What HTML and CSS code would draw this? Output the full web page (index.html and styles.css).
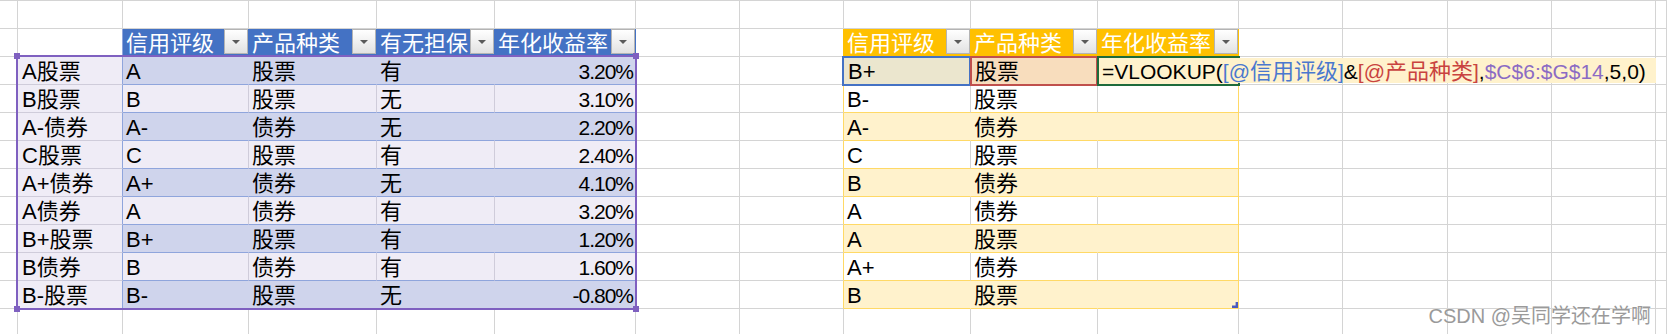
FILE: index.html
```html
<!DOCTYPE html>
<html lang="zh-CN">
<head>
<meta charset="utf-8">
<title>VLOOKUP</title>
<link rel="stylesheet" href="styles.css">
</head>
<body>
<div class="sheet">
  <div class="cells">
    <!-- row 1 -->
    <div class="c"></div><div class="c"></div><div class="c"></div><div class="c"></div><div class="c"></div><div class="c"></div><div class="c"></div><div class="c"></div><div class="c"></div><div class="c"></div><div class="c"></div><div class="c"></div><div class="c"></div><div class="c"></div><div class="c"></div><div class="c"></div>
    <!-- row 2 : headers -->
    <div class="c"></div><div class="c br"></div>
    <div class="c hb"><span>信用评级</span><span class="dd"></span></div>
    <div class="c hb"><span>产品种类</span><span class="dd"></span></div>
    <div class="c hb"><span>有无担保</span><span class="dd"></span></div>
    <div class="c hb"><span>年化收益率</span><span class="dd"></span></div>
    <div class="c"></div><div class="c yr"></div>
    <div class="c hy"><span>信用评级</span><span class="dd"></span></div>
    <div class="c hy"><span>产品种类</span><span class="dd"></span></div>
    <div class="c hy"><span>年化收益率</span><span class="dd"></span></div>
    <div class="c"></div><div class="c"></div><div class="c"></div><div class="c"></div><div class="c"></div>
    <!-- row 3 -->
    <div class="c"></div><div class="c b">A股票</div><div class="c d">A</div><div class="c d">股票</div><div class="c d">有</div><div class="c d r">3.20%</div><div class="c"></div><div class="c yl"></div>
    <div class="c ib">B+</div><div class="c jp">股票</div><div class="c y k"></div>
    <div class="c"></div><div class="c"></div><div class="c"></div><div class="c"></div><div class="c"></div>
    <!-- row 4 -->
    <div class="c"></div><div class="c b">B股票</div><div class="c l">B</div><div class="c l">股票</div><div class="c l">无</div><div class="c l r">3.10%</div><div class="c"></div><div class="c yl"></div>
    <div class="c w">B-</div><div class="c w">股票</div><div class="c w k"></div>
    <div class="c"></div><div class="c"></div><div class="c"></div><div class="c"></div><div class="c"></div>
    <!-- row 5 -->
    <div class="c"></div><div class="c b">A-债券</div><div class="c d">A-</div><div class="c d">债券</div><div class="c d">无</div><div class="c d r">2.20%</div><div class="c"></div><div class="c yl"></div>
    <div class="c y">A-</div><div class="c y">债券</div><div class="c y k"></div>
    <div class="c"></div><div class="c"></div><div class="c"></div><div class="c"></div><div class="c"></div>
    <!-- row 6 -->
    <div class="c"></div><div class="c b">C股票</div><div class="c l">C</div><div class="c l">股票</div><div class="c l">有</div><div class="c l r">2.40%</div><div class="c"></div><div class="c yl"></div>
    <div class="c w">C</div><div class="c w">股票</div><div class="c w k"></div>
    <div class="c"></div><div class="c"></div><div class="c"></div><div class="c"></div><div class="c"></div>
    <!-- row 7 -->
    <div class="c"></div><div class="c b">A+债券</div><div class="c d">A+</div><div class="c d">债券</div><div class="c d">无</div><div class="c d r">4.10%</div><div class="c"></div><div class="c yl"></div>
    <div class="c y">B</div><div class="c y">债券</div><div class="c y k"></div>
    <div class="c"></div><div class="c"></div><div class="c"></div><div class="c"></div><div class="c"></div>
    <!-- row 8 -->
    <div class="c"></div><div class="c b">A债券</div><div class="c l">A</div><div class="c l">债券</div><div class="c l">有</div><div class="c l r">3.20%</div><div class="c"></div><div class="c yl"></div>
    <div class="c w">A</div><div class="c w">债券</div><div class="c w k"></div>
    <div class="c"></div><div class="c"></div><div class="c"></div><div class="c"></div><div class="c"></div>
    <!-- row 9 -->
    <div class="c"></div><div class="c b">B+股票</div><div class="c d">B+</div><div class="c d">股票</div><div class="c d">有</div><div class="c d r">1.20%</div><div class="c"></div><div class="c yl"></div>
    <div class="c y">A</div><div class="c y">股票</div><div class="c y k"></div>
    <div class="c"></div><div class="c"></div><div class="c"></div><div class="c"></div><div class="c"></div>
    <!-- row 10 -->
    <div class="c"></div><div class="c b">B债券</div><div class="c l">B</div><div class="c l">债券</div><div class="c l">有</div><div class="c l r">1.60%</div><div class="c"></div><div class="c yl"></div>
    <div class="c w">A+</div><div class="c w">债券</div><div class="c w k"></div>
    <div class="c"></div><div class="c"></div><div class="c"></div><div class="c"></div><div class="c"></div>
    <!-- row 11 -->
    <div class="c"></div><div class="c b">B-股票</div><div class="c d">B-</div><div class="c d">股票</div><div class="c d">无</div><div class="c d r">-0.80%</div><div class="c"></div><div class="c yl"></div>
    <div class="c y">B</div><div class="c y">股票</div><div class="c y k"></div>
    <div class="c"></div><div class="c"></div><div class="c"></div><div class="c"></div><div class="c"></div>
    <!-- row 12 -->
    <div class="c"></div><div class="c"></div><div class="c"></div><div class="c"></div><div class="c"></div><div class="c"></div><div class="c"></div><div class="c"></div><div class="c"></div><div class="c"></div><div class="c"></div><div class="c"></div><div class="c"></div><div class="c"></div><div class="c"></div><div class="c"></div>
  </div>

  <div class="overlay">
    <div class="sel"><span class="hd tl"></span><span class="hd tr"></span><span class="hd bl"></span><span class="hd bra"></span></div>
    <div class="refb"></div>
    <div class="refr"></div>
    <div class="act"></div>
    <div class="edit">=VLOOKUP(<span class="fb">[@<span class="cj">信用评级</span>]</span>&amp;<span class="fr">[@<span class="cj">产品种类</span>]</span>,<span class="fp">$C$6:$G$14</span>,5,0)</div>
    <div class="rz"></div>
    <div class="wm">CSDN @吴同学还在学啊</div>
  </div>
</div>
</body>
</html>
```
FILE: styles.css
```css
* { box-sizing: border-box; }

html, body {
  margin: 0;
  padding: 0;
  background: #ffffff;
  overflow: hidden;
}

body {
  width: 1667px;
  height: 334px;
  font-family: "Liberation Sans", "Noto Sans CJK SC", sans-serif;
  font-size: 22px;
  color: #000000;
}

.sheet {
  display: grid;
  grid-template-columns: minmax(0, 1fr);
  border-top: 1px solid #d4d4d4;
}

.cells,
.overlay {
  grid-area: 1 / 1;
  display: grid;
  grid-template-columns: 18px 105px 126px 128px 118px 141px 104px 104px 127px 127px 141px 104px 105px 104px 104px minmax(0, 1fr);
  grid-template-rows: repeat(12, 28px);
  min-width: 0;
}

.overlay { z-index: 1; }

/* ---------- cells ---------- */
.c {
  border-right: 1px solid #d4d4d4;
  border-bottom: 1px solid #d4d4d4;
  padding: 3px 3px 0 3px;
  line-height: 24px;
  white-space: nowrap;
  overflow: hidden;
}

.br { border-right-color: #8fa5dc; }
.yr { border-right-color: #ffc000; }
.yl { border-right-color: #ffd966; }

/* headers */
.hb, .hy {
  display: flex;
  justify-content: space-between;
  align-items: flex-start;
  padding: 0 0 0 3px;
  color: #ffffff;
  overflow: visible;
}
.hb { background: #4472c4; border-color: #4472c4; }
.hy { background: #ffc000; border-color: #ffc000; }
.hb span:first-child, .hy span:first-child {
  padding-top: 3px;
  line-height: 24px;
}

.dd {
  flex: none;
  width: 24px;
  height: 25px;
  border: 1px solid #b4b4b4;
  background: linear-gradient(#ffffff, #e2e2e2);
  display: flex;
  align-items: center;
  justify-content: center;
}
.dd::after {
  content: "";
  border-left: 4px solid transparent;
  border-right: 4px solid transparent;
  border-top: 4px solid #5a5a5a;
}

/* left table (selected, tinted) */
.b {
  background: #efecf6;
  border-bottom-color: #cfccda;
  border-right-color: #8fa5dc;
  padding-left: 4px;
}
.d {
  background: #cfd4ec;
  border-right-color: #cfd4ec;
  border-bottom-color: #8fa5dc;
}
.l {
  background: #efecf6;
  border-right-color: #cfccda;
  border-bottom-color: #8fa5dc;
}
.r {
  text-align: right;
  padding-right: 2px;
  font-size: 21px;
  letter-spacing: -1px;
}

/* right table */
.y {
  background: #fff2cc;
  border-right-color: #fff2cc;
  border-bottom-color: #ffd966;
}
.w {
  border-bottom-color: #ffd966;
}
.k { border-right-color: #ffd966; }
.ib { background: #ebe6ce; padding-left: 4px; }
.jp { background: #f8ddbd; padding-left: 4px; }

/* ---------- overlay ---------- */
.sel {
  grid-row: 3 / 12;
  grid-column: 2 / 7;
  margin: -2px -1px -1px -2px;
  border: 2px solid #7f60c0;
  position: relative;
}
.hd {
  position: absolute;
  width: 6px;
  height: 6px;
  background: #7f60c0;
}
.tl { left: -4px; top: -4px; }
.tr { right: -4px; top: -4px; }
.bl { left: -4px; bottom: -4px; }
.bra { right: -4px; bottom: -4px; }

.refb {
  grid-row: 3;
  grid-column: 9;
  margin: -1px 0 -1px -2px;
  border: 2px solid #4472c4;
}
.refr {
  grid-row: 3;
  grid-column: 10;
  margin: -1px 0 -1px -1px;
  border: 2px solid #c0504d;
}
.act {
  grid-row: 3;
  grid-column: 11;
  margin: -1px -1px -1px -1px;
  border: 2px solid #1e6b3c;
}
.edit {
  grid-row: 3;
  grid-column: 11 / 16;
  min-width: 0;
  overflow: hidden;
  margin: 1px 0 2px 1px;
  padding: 2px 0 0 3px;
  font-size: 21px;
  line-height: 24px;
  background: #fff2cc;
  white-space: nowrap;
  position: relative;
  z-index: 2;
}
.cj { font-size: 22px; }
.fb { color: #4a78cf; }
.fr { color: #c9433f; }
.fp { color: #8b6bc4; }

.rz {
  grid-row: 11;
  grid-column: 11;
  justify-self: end;
  align-self: end;
  width: 6px;
  height: 6px;
  margin: 0 1px 1px 0;
  background: #4a5bbf;
  clip-path: polygon(100% 0, 100% 100%, 0 100%, 0 60%, 60% 60%, 60% 0);
}

.wm {
  grid-row: 12;
  grid-column: 12 / 17;
  justify-self: end;
  align-self: start;
  margin: -4px 16px 0 0;
  font-size: 20px;
  line-height: 22px;
  color: #9a9a9a;
  text-shadow: 0 0 1px #ffffff;
  white-space: nowrap;
}
```
